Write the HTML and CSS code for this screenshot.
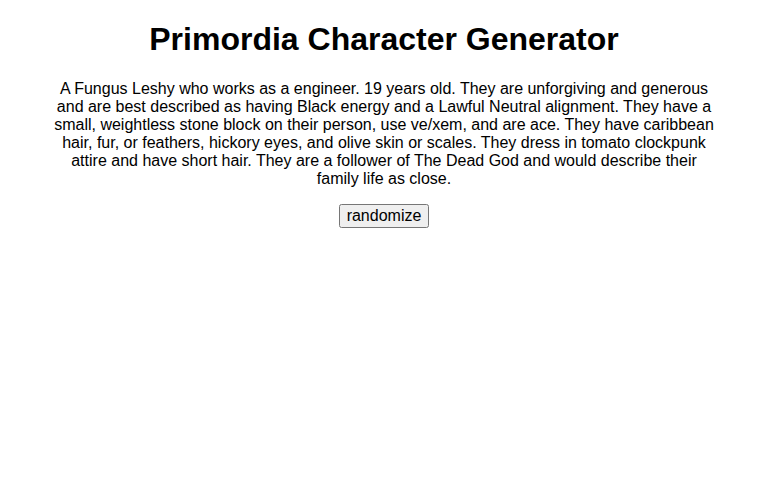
FILE: index.html
```html
<!DOCTYPE html>
<html lang="en">
<head>
  <meta charset="UTF-8">
  <title>Primordia Character Generator</title>
  <link rel="stylesheet" href="styles.css">
</head>
<body>
  <div class="wrap">
    <h1 class="title">Primordia Character Generator</h1>
    <p class="desc">A Fungus Leshy who works as a engineer. 19 years old. They are unforgiving and generous and are best described as having Black energy and a Lawful Neutral alignment. They have a small, weightless stone block on their person, use ve/xem, and are ace. They have caribbean hair, fur, or feathers, hickory eyes, and olive skin or scales. They dress in tomato clockpunk attire and have short hair. They are a follower of The Dead God and would describe their family life as close.</p>
    <div class="actions">
      <button class="btn" type="button">randomize</button>
    </div>
  </div>
</body>
</html>
```

FILE: styles.css
```css
body {
  margin: 0;
  font-family: "Liberation Sans", Arial, sans-serif;
  font-size: 16px;
  color: #000;
  background: #fff;
}

.wrap {
  max-width: 664px;
  margin: 0 auto;
  text-align: center;
}

.title {
  font-size: 32px;
}

.desc {
  line-height: 18px;
}

.btn {
  font: inherit;
  line-height: 18px;
  padding: 1px 6px;
}
```
